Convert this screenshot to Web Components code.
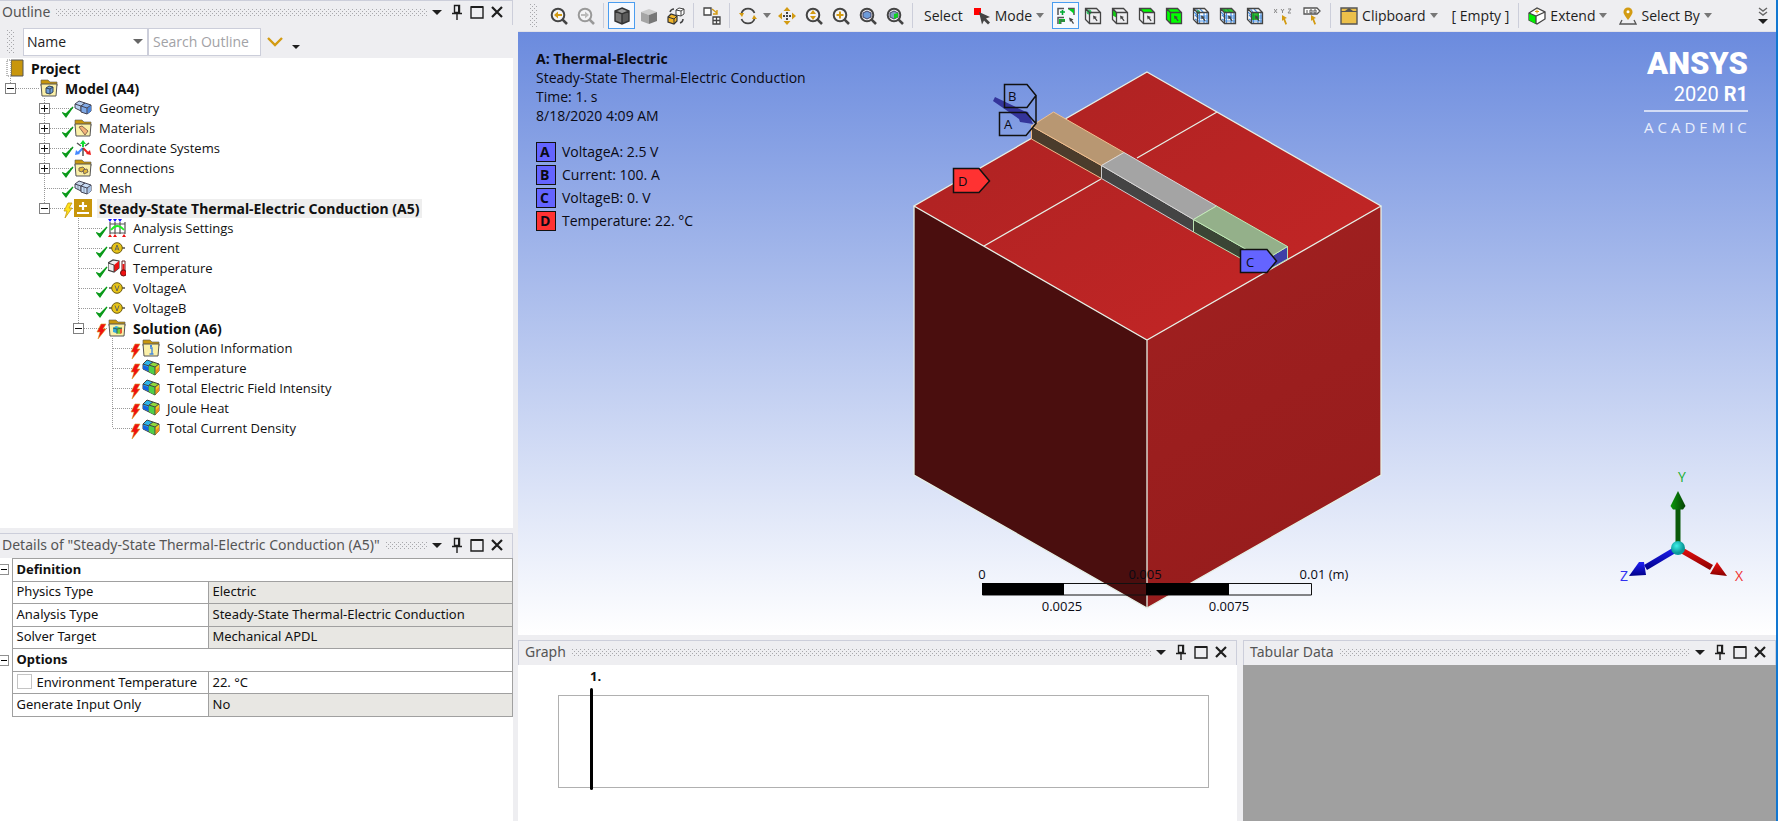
<!DOCTYPE html>
<html lang="en">
<head>
<meta charset="utf-8">
<title>Mechanical - Thermal-Electric</title>
<style>
html, body { height: 100%; margin: 0; }
body { font: 14px/20px "Open Sans", "Noto Sans", sans-serif; color: #1e1e1e; background: #eeeef1; overflow: hidden; }
</style>
</head>
<body>
<app-shell></app-shell>
<script>
const define = (name, css, html, setup) => {
  const tpl = document.createElement('template');
  tpl.innerHTML = `<style>*{box-sizing:border-box}button{font:inherit;color:inherit;background:none;border:0;padding:0;margin:0}${css}</style>${html}`;
  customElements.define(name, class extends HTMLElement {
    constructor() {
      super();
      this.attachShadow({ mode: 'open' }).append(tpl.content.cloneNode(true));
    }
    connectedCallback() { if (setup) setup(this, this.shadowRoot); }
  });
};

/* ---------- icon set, 18 x 18 grid ---------- */
const folder = '<path d="M1 3V1h7l2 2h7v4H1z" fill="#c8960c" stroke="#555" stroke-width=".6"/><path d="M1 5h16l-1 12H2z" fill="#fbf0a8" stroke="#555" stroke-width="1"/>';
const lens = (inner, c = '#444') => `<circle cx="8" cy="8" r="6.3" fill="#f4f4f6" stroke="${c}" stroke-width="2"/><path d="M12.600 12.600L17 17" stroke="${c}" stroke-width="2.600"/>${inner}`;
const pickBox = (inner, cursor = true) => `${inner}<path d="M1.500 1.500h11l4 4v11h-11l-4-4zM1.500 1.500l4 4h11M5.500 5.500v11" fill="none" stroke="#444" stroke-width="1.300"/>${cursor ? '<path d="M9 8.500l4 1.500-1.400.7 2 2.800-1 .7-2-2.800-1 1.100z" fill="#444"/>' : ''}`;
const mesh = '<path d="M2 2h11l4 4v11H6l-4-4z" fill="#fff"/><path d="M4.500 2l3 4v11M8 2l4 4v11M3 8l3 3h11M3 12l3 2h11M15 6v11M2 5l4 4h11" fill="none" stroke="#4a90e2" stroke-width="1.200"/>';
const meter = t => `<path d="M1 9h16" stroke="#444" stroke-width="1.400"/><circle cx="9" cy="9" r="5.300" fill="#e6c318" stroke="#6d5b10" stroke-width="1"/>${t}`;
const bodies = (a, b, c) => `<path d="M1 5l4-3 6 2v6l-4 2-6-3z" fill="${a}" stroke="#445" stroke-width="1"/><path d="M1 5l6 2 4-3M7 7v5" fill="none" stroke="#445"/><path d="M7 7l4-3 6 2v6l-4 3-6-2z" fill="${b}" stroke="#445" stroke-width="1"/><path d="M13.500 9l3.500-3v6l-3.500 3z" fill="${c}"/><path d="M7 7l6 2 4-3M13 9v6" fill="none" stroke="#445"/>`;
const ICONS = {
  'zoom-prev': lens('<path d="M4 8l4-3.500v2.500h4v2H8v2.500z" fill="#d39b12"/>'),
  'zoom-next': lens('<path d="M12 8L8 4.500v2.500H4v2h4v2.500z" fill="#bbb"/>', '#999'),
  'cube-edges': '<path d="M9 1l7 3-7 3-7-3z" fill="#999"/><path d="M2 4l7 3v10l-7-3z" fill="#777"/><path d="M16 4L9 7v10l7-3z" fill="#5a5a5a"/><path d="M9 1l7 3v10l-7 3-7-3V4zM2 4l7 3 7-3M9 7v10" fill="none" stroke="#333" stroke-width="1.400"/>',
  'cube-shaded': '<path d="M9 2l8 3-8 3-8-3z" fill="#ccc"/><path d="M1 5l8 3v9l-8-3z" fill="#a5a5a5"/><path d="M17 5L9 8v9l8-3z" fill="#777"/>',
  'cube-swap': '<path d="M1 10l3-3 6 2v5l-3 3-6-2z" fill="#f0b429" stroke="#333" stroke-width="1.200"/><path d="M1 10l6 2 3-3M7 12v5" fill="none" stroke="#333"/><path d="M9 3l3-2 5 1v5l-3 2-5-1z" fill="#fff" stroke="#444"/><path d="M9 3l5 1 3-2M14 4v5" fill="none" stroke="#444"/><path d="M3 5q1-3 4-3M13 16q3-1 3-4" fill="none" stroke="#444" stroke-width="1.500"/>',
  'rescale': '<path d="M1 1h7v7H1zM10 10h7v7h-7zM13.500 10v7M10 13.500h7" fill="#fff" stroke="#444" stroke-width="1.300"/><path d="M9 2l5 4M14 3v4h-4" fill="none" stroke="#d39b12" stroke-width="1.400"/>',
  'rotate': '<path d="M2.500 6a7 7 0 0 1 13 0M2.500 12a7 7 0 0 0 13 0" fill="none" stroke="#444" stroke-width="1.800"/><path d="M0 6l5 0-2 4zM18 12h-5l2-4z" fill="#d39b12"/>',
  'pan': '<path d="M9 0l3.500 4h-7zM9 18l3.500-4h-7zM0 9l4-3.500v7zM18 9l-4-3.500v7z" fill="#d39b12"/><path d="M9 5v2M9 11v2M5 9h2M11 9h2M8 9h2" stroke="#444" stroke-width="2"/>',
  'zoom': lens('<path d="M8 3l3 4H5zM8 13l3-4H5z" fill="#d39b12"/>'),
  'zoom-box': lens('<path d="M8 4.500v7M4.500 8h7" stroke="#d39b12" stroke-width="2"/>'),
  'zoom-fit': lens('<path d="M8 4l4 2v4l-4 2-4-2V6z" fill="#6d9bd8" stroke="#446"/>'),
  'zoom-sel': lens('<path d="M8 4l4 2v4l-4 2-4-2V6z" fill="#7fa0c0" stroke="#446"/><path d="M8 7l4-1v4l-4 2z" fill="#10d020"/>'),
  'mode': '<path d="M1 1h7v7H1z" fill="#f00"/><path d="M6 5l11 5-4 1.500 4 4-2 2-4-4-2 4z" fill="#444"/>',
  'smart': '<path d="M1 8V1.500h6M1 17v-6.500h6M11 1.500h6V8" fill="none" stroke="#555" stroke-width="1.500"/><path d="M11 2h6v5l-2-2z" fill="#0c2"/><path d="M3 5h5M5.500 3v5" stroke="#0a3" stroke-width="1.600"/><path d="M2 12h6v3H4v2H2z" fill="#0c2"/><path d="M4 12v5M4 14h4" stroke="#555"/><path d="M12 10.500l4.500 2-1.500.7 2 3-1 .7-2-3-1 1z" fill="#444"/>',
  'pick-vertex': pickBox('<circle cx="5" cy="5" r="2.500" fill="#3c6"/>'),
  'pick-edge': pickBox('<path d="M1 1l5 5v5L1 8z" fill="#1c1"/>'),
  'pick-face': pickBox('<path d="M1.500 1.500h11l4 4h-11z" fill="#0f0"/>'),
  'pick-body': pickBox('<path d="M1.500 1.500h11l4 4v11h-11l-4-4z" fill="#0f0"/>'),
  'pick-node': pickBox(mesh + '<circle cx="6" cy="5" r="2" fill="#3a6"/>'),
  'pick-elface': pickBox(mesh + '<path d="M2 2h11l3 4H5z" fill="#0b0" opacity=".8"/>'),
  'pick-elem': pickBox(mesh + '<path d="M5 5h8v8H5z" fill="#0a0" opacity=".8"/>'),
  'coord': '<path d="M0 2l3 4M3 2L0 6M7 2l1.500 2L10 2M8.500 4v2M14 2h3l-3 4h3" fill="none" stroke="#888"/><path d="M8 8l5 3-2 .8L13 17l-1.600.7-2-5L8 14z" fill="#d39b12"/>',
  'probe': '<path d="M1 1h13l3 3-3 3H1z" fill="#fff" stroke="#555" stroke-width="1.300"/><path d="M4 3v3M7 3h2v3H7zM11 3h2v3h-2z" fill="none" stroke="#555"/><path d="M8 8l5 3-2 .8L13 17l-1.600.7-2-5L8 14z" fill="#d39b12"/>',
  'clipboard': '<path d="M1 1h16v16H1z" fill="#ecc04a" stroke="#555" stroke-width="1.400"/><path d="M1 4.500h16" stroke="#555"/><path d="M5 4l4-3 4 3z" fill="#555"/>',
  'extend': '<path d="M1 6l8-5 8 4v7l-8 5-8-4z" fill="#fff" stroke="#444" stroke-width="1.300"/><path d="M1 6l7 3v8l-7-4z" fill="#0e0"/><path d="M1 6l7 3 9-4M8 9v8" fill="none" stroke="#444" stroke-width="1.300"/><path d="M9 2.500v4M7 4.500h4" stroke="#d39b12"/>',
  'select-by': '<path d="M9 13C5 8 4.500 6.500 4.500 4.800a4.500 4.300 0 0 1 9 0C13.500 6.500 13 8 9 13z" fill="#d39b12"/><circle cx="9" cy="4.800" r="1.500" fill="#fff"/><path d="M3 13l-2 4h16l-2-4" fill="none" stroke="#555" stroke-width="1.300"/>',
  'project': '<path d="M5 1h12v16H5z" fill="#c8960c" stroke="#555"/><path d="M1 1h4v16H1z" fill="#fff" stroke="#777" stroke-dasharray="1 1"/>',
  'model': folder + '<path d="M6 9l3-2 4 1v5l-3 2-4-1z" fill="#6f9fdc" stroke="#345"/><path d="M6 9l4 1 3-2M10 10v5" fill="none" stroke="#345"/>',
  'geometry': bodies('#b5cdee', '#7fa9e6', '#4a86dd'),
  'materials': folder + '<path d="M5 8l3-1 6 5-3 4z" fill="#f3b27a" stroke="#8a6a50"/>',
  'coords': '<path d="M9 1l3 4H6z" fill="#1d3"/><path d="M9 4v4" stroke="#1d3" stroke-width="2"/><path d="M17 16l-5-1 4-4z" fill="#e22"/><path d="M1 16l1-5 4 4z" fill="#48f"/><path d="M9 9l-5 5" stroke="#48f" stroke-width="2"/><path d="M9 9l5 5" stroke="#e22" stroke-width="2"/><path d="M3 4l4 3M15 4l-4 3M9 9v8" stroke="#555" stroke-width="1.500"/>',
  'connections': folder + '<path d="M5 9l4-1 2 2-3 3-3-1zM9 11l4-1 1 3-4 2z" fill="#e2b93c" stroke="#765"/>',
  'mesh': bodies('#c6d6ea', '#c6dbf5', '#a4c0e4') + '<path d="M4 6v5M10 8v6" stroke="#567" stroke-width=".6"/>',
  'analysis': '<path d="M0 0h18v18H0z" fill="#c8960c"/><path d="M9 3v8M5 7h8M3 14h12" stroke="#fff" stroke-width="2.200"/>',
  'settings': '<path d="M2 3v12M7 3v12M12 3v12M17 3v12M2 5h15M2 14h15" stroke="#555" stroke-width="1.200"/><path d="M3 11q6-8 13 0" fill="none" stroke="#2e2" stroke-width="1.800"/><path d="M0 0h4L2 3zM5 0h4L7 3zM10 0h4l-2 3z" fill="#11f"/><path d="M0 18h4l-2-3zM5 18h4l-2-3zM14 18h4l-2-3z" fill="#e11"/>',
  'current': meter('<path d="M7 11.500L9 6l2 5.500M7.500 10h3" fill="none" stroke="#665"/>'),
  'voltage': meter('<path d="M7 6.500L9 12l2-5.500" fill="none" stroke="#665"/>'),
  'temp': '<path d="M0 4l5-3 6 1v7l-5 4-6-2z" fill="#eee" stroke="#444" stroke-width="1.200"/><path d="M6 6l5-4v7l-5 4z" fill="#e11"/><path d="M0 4l6 2v7" fill="none" stroke="#444"/><path d="M14 2h3v9h-3z" fill="#fff" stroke="#622"/><path d="M14.500 5h2v7h-2z" fill="#e11"/><circle cx="15.500" cy="14" r="3" fill="#e11" stroke="#611"/>',
  'solution': folder + '<path d="M5 9l3-2 3 1v5l-3 1-3-1z" fill="#3ad"/><path d="M9 9l2-1 3 1v5l-3 1-2-1z" fill="#7c3"/><path d="M12 10l2-1v5l-2 1z" fill="#e53"/><path d="M5 9l4 1 5-1M9 10v5" fill="none" stroke="#365"/>',
  'info': folder + '<path d="M8 9h2v6M7.500 15h4" fill="none" stroke="#48d" stroke-width="1.400"/><path d="M8 6h2v2H8z" fill="#48d"/>',
  'result': '<path d="M1 5l4-4 6 2v7l-4 3-6-3z" fill="#2fb4e8" stroke="#444"/><path d="M1 6l5 2v4L1 10z" fill="#1666e0"/><path d="M7 6l4-3 6 2v7l-4 4-6-3z" fill="#8fd83a" stroke="#444"/><path d="M7 6l6 2v8l-6-3z" fill="#4fd048"/><path d="M13 8l4-3v7l-4 4z" fill="#f3d01c"/><path d="M14 11l3-3v4l-3 3z" fill="#f08a22"/><path d="M7 6l6 2 4-3M13 8v8M1 5l6 2" fill="none" stroke="#444"/>',
  'more': '<path d="M5 1l4 3 4-3M5 5l4 3 4-3" fill="none" stroke="#666" stroke-width="1.400"/><path d="M4 12h10l-5 5z" fill="#1e1e1e"/>',
  'arrow': '<path d="M4 7h10l-5 5z" fill="#1e1e1e"/>',
  'pin': '<path d="M6.500 2.500h5v7h-5zM4 10.500h10M9 11v6" fill="none" stroke="#1e1e1e" stroke-width="1.400"/><path d="M10 2h2v8h-2z" fill="#1e1e1e"/>',
  'maximize': '<path d="M3 4h12v11H3z" fill="none" stroke="#1e1e1e" stroke-width="1.400"/><path d="M3 4h12" stroke="#1e1e1e" stroke-width="2"/>',
  'close': '<path d="M4 4l10 10M14 4L4 14" stroke="#1e1e1e" stroke-width="2.200"/>',
  'chevron': '<path d="M2 5l7 7 7-7" fill="none" stroke="#d39b12" stroke-width="2.400"/>'
};
class UiIcon extends HTMLElement {
  constructor() { super(); this.attachShadow({ mode: 'open' }); }
  static get observedAttributes() { return ['name']; }
  attributeChangedCallback() { this.render(); }
  connectedCallback() { this.render(); }
  render() {
    this.shadowRoot.innerHTML = `<style>:host{display:block;flex:none;width:18px;height:18px}svg{display:block}</style><svg width="18" height="18" viewBox="0 0 18 18" aria-hidden="true">${ICONS[this.getAttribute('name')] || ''}</svg>`;
  }
}
customElements.define('ui-icon', UiIcon);

define('dot-grip', `
:host{display:block;height:7px;flex:1;
background-image:conic-gradient(from 270deg at 1px 1px,#a8a8ac 90deg,transparent 0),conic-gradient(from 270deg at 1px 1px,#a8a8ac 90deg,transparent 0);
background-size:4px 4px;background-position:0 0,2px 2px}
:host([vertical]){flex:none;width:7px;height:23px}`, '');

define('panel-title', `
:host{display:flex;align-items:center;height:25px;padding:0 5px 2px 2px;color:#555;border-top:1px solid #ccceda;border-right:1px solid #ccceda;background:#eeeef1}
h2{margin:0 6px 0 0;font:400 14px/20px "Noto Sans","Open Sans",sans-serif;white-space:nowrap}
button{width:20px;height:20px;display:grid;place-items:center}`,
`<h2><slot></slot></h2><dot-grip></dot-grip>
<button aria-label="Menu"><ui-icon name="arrow"></ui-icon></button><button aria-label="Pin"><ui-icon name="pin"></ui-icon></button><button aria-label="Maximize"><ui-icon name="maximize"></ui-icon></button><button aria-label="Close"><ui-icon name="close"></ui-icon></button>`);

define('outline-search', `
:host{display:flex;align-items:center;height:33px;padding-left:7px;background:#eeeef1}
.pick{display:flex;align-items:center;width:125px;height:28px;margin-left:9px;background:#fff;border:1px solid #ccceda}
select{appearance:none;flex:1;min-width:0;height:26px;padding:0 3px;border:0;background:none;font:inherit;color:#1e1e1e}
.pick svg{margin-right:4px;flex:none}
input{width:113px;height:28px;padding:0 4px;border:1px solid #ccceda;background:#fff;font:inherit}
input::placeholder{color:#a2a2a6;opacity:1}
.go{margin-left:5px}.menu{width:18px;height:18px;margin:10px 0 0 3px}`,
`<dot-grip vertical></dot-grip>
<span class="pick"><select aria-label="Search by"><option>Name</option></select><svg width="10" height="6"><path d="M0 0h10L5 5z" fill="#666"/></svg></span>
<input type="text" aria-label="Search Outline" placeholder="Search Outline">
<button class="go" aria-label="Search"><ui-icon name="chevron"></ui-icon></button>
<button class="menu" aria-label="Options"><svg width="18" height="18"><path d="M5 7h8l-4 4z" fill="#1e1e1e"/></svg></button>`);

/* ---------- outline tree ---------- */
const STATUS = {
  ok: '<path d="M1 11l3 4 7-10-6 6-1 1z" fill="#0a9a1a" stroke="#0a9a1a" stroke-width="1.300"/>',
  stale: '<path d="M6 1h4L7 6h3L3 16l2-7H2z" fill="#ffe21a" stroke="#c59a10" stroke-width=".8"/>',
  bolt: '<path d="M5 2h5L7 7h3L2 17l2-7H1z" fill="#f01010" stroke="#d8a020" stroke-width=".6"/>'
};
define('tree-node', `
:host{display:block;--dots:#999}
.row{display:flex;align-items:center;height:20px}
.gutter{position:relative;width:11px;height:20px;flex:none}
.v{display:block;width:1px;height:20px;margin-left:5px;background:linear-gradient(var(--dots) 50%,transparent 50%) 0 0/1px 2px}
:host([last]) .v{height:10px}
.toggle{position:absolute;left:0;top:5px;width:11px;height:11px;background:#fff;border:1px solid #808080;display:grid;place-items:center}
.dash{width:24px;height:1px;flex:none;background:linear-gradient(90deg,var(--dots) 50%,transparent 50%) 0 0/2px 1px;margin-right:-12px}
:host([leaf]) .dash{margin-left:-5px;margin-right:-7px}
.status{width:12px;height:18px;flex:none;margin-top:6px}
.text{margin-left:5px;padding:0 2px;line-height:19px;white-space:nowrap;font-size:13px;color:#111}
:host([bold]) .text{font:700 14px/19px "Noto Sans","Open Sans",sans-serif}
:host([selected]) .text{background:#eeeeee}
.kids{margin-left:34px}
:host([root]) .gutter,:host([root]) .dash,:host([root]) .status{display:none}
:host([root]) .row{padding-left:6px}
:host([root]) .kids{margin-left:5px}`,
`<div class="row"><span class="gutter"><span class="v"></span></span><span class="dash"></span><svg class="status" viewBox="0 0 12 18"></svg><ui-icon></ui-icon><span class="text"></span></div><div class="kids"><slot></slot></div>`,
(host, root) => {
  const t = host.getAttribute('toggle');
  if (t && !root.querySelector('.toggle')) {
    const b = document.createElement('button');
    b.className = 'toggle';
    b.setAttribute('aria-label', t === 'minus' ? 'Collapse' : 'Expand');
    b.innerHTML = `<svg width="7" height="7"><path d="M0 3h7v1H0z${t === 'plus' ? 'M3 0h1v7H3z' : ''}" fill="#111"/></svg>`;
    root.querySelector('.gutter').append(b);
  }
  root.querySelector('.status').innerHTML = STATUS[host.getAttribute('status')] || '';
  root.querySelector('ui-icon').setAttribute('name', host.getAttribute('icon'));
  root.querySelector('.text').textContent = host.getAttribute('label');
});

define('outline-tree', `:host{display:block;background:#fff;padding-bottom:8px;overflow:hidden}`, `
<tree-node root bold icon="project" label="Project">
 <tree-node last bold toggle="minus" icon="model" label="Model (A4)">
  <tree-node toggle="plus" status="ok" icon="geometry" label="Geometry"></tree-node>
  <tree-node toggle="plus" status="ok" icon="materials" label="Materials"></tree-node>
  <tree-node toggle="plus" status="ok" icon="coords" label="Coordinate Systems"></tree-node>
  <tree-node toggle="plus" status="ok" icon="connections" label="Connections"></tree-node>
  <tree-node leaf status="ok" icon="mesh" label="Mesh"></tree-node>
  <tree-node last bold selected toggle="minus" status="stale" icon="analysis" label="Steady-State Thermal-Electric Conduction (A5)">
   <tree-node leaf status="ok" icon="settings" label="Analysis Settings"></tree-node>
   <tree-node leaf status="ok" icon="current" label="Current"></tree-node>
   <tree-node leaf status="ok" icon="temp" label="Temperature"></tree-node>
   <tree-node leaf status="ok" icon="voltage" label="VoltageA"></tree-node>
   <tree-node leaf status="ok" icon="voltage" label="VoltageB"></tree-node>
   <tree-node last bold toggle="minus" status="bolt" icon="solution" label="Solution (A6)">
    <tree-node leaf status="bolt" icon="info" label="Solution Information"></tree-node>
    <tree-node leaf status="bolt" icon="result" label="Temperature"></tree-node>
    <tree-node leaf status="bolt" icon="result" label="Total Electric Field Intensity"></tree-node>
    <tree-node leaf status="bolt" icon="result" label="Joule Heat"></tree-node>
    <tree-node last leaf status="bolt" icon="result" label="Total Current Density"></tree-node>
   </tree-node>
  </tree-node>
 </tree-node>
</tree-node>`);

/* ---------- details ---------- */
define('details-grid', `
:host{display:block;background:#fff}
table{width:100%;height:159px;border-collapse:collapse;table-layout:fixed;font:13px/18px "Noto Sans","Open Sans",sans-serif;color:#111}
.g{width:12px}.k{width:196px}
td,th{padding:0 4px 2px;border:1px solid #a0a0a0;text-align:left;font-weight:400;white-space:nowrap}
th[colspan]{font-weight:700}
td.gut{border-width:0 1px 0 0;padding:0}
td.ro{background:#e8e7e3}
button{display:grid;place-items:center;width:9px;height:11px;border:1px solid #909090;border-left:0}
label{display:flex;align-items:center;gap:5px}
input{appearance:none;width:15px;height:15px;margin:0;border:1px solid #c4c4c4;background:#fff}`,
`<table><colgroup><col class="g"><col class="k"><col></colgroup>
<tr><td class="gut"><button aria-label="Collapse Definition"><svg width="6" height="1"><path d="M0 0h6v1H0z"/></svg></button></td><th colspan="2">Definition</th></tr>
<tr><td class="gut"></td><th>Physics Type</th><td class="ro">Electric</td></tr>
<tr><td class="gut"></td><th>Analysis Type</th><td class="ro">Steady-State Thermal-Electric Conduction</td></tr>
<tr><td class="gut"></td><th>Solver Target</th><td class="ro">Mechanical APDL</td></tr>
<tr><td class="gut"><button aria-label="Collapse Options"><svg width="6" height="1"><path d="M0 0h6v1H0z"/></svg></button></td><th colspan="2">Options</th></tr>
<tr><td class="gut"></td><th><label><input type="checkbox">Environment Temperature</label></th><td>22. °C</td></tr>
<tr><td class="gut"></td><th>Generate Input Only</th><td class="ro">No</td></tr></table>`);

/* ---------- graphics toolbar ---------- */
define('tool-button', `
:host{display:block;flex:none}
button{display:flex;align-items:center;justify-content:center;gap:4px;min-width:27px;height:27px;white-space:nowrap;line-height:20px}
:host([on]) button{border:1px solid #4a9df0;background:#f6f9fe}
:host([text]) button{padding:0 5px}
:host([wide]) button{min-width:29px}
.dd{display:none}
:host([drop]) .dd{display:block}`,
`<button><ui-icon></ui-icon><span class="t"><slot></slot></span><svg class="dd" width="8" height="5"><path d="M0 0h8L4 5z" fill="#777"/></svg></button>`,
(host, root) => {
  const n = host.getAttribute('icon');
  root.querySelector('ui-icon').setAttribute('name', n);
  if (!host.hasAttribute('text')) { root.querySelector('.t').style.display = 'none'; root.querySelector('button').setAttribute('aria-label', n); }
});
define('graphics-toolbar', `
:host{display:flex;align-items:center;height:32px;padding-left:12px;background:#eeeef1;border-bottom:1px solid #e2e2e8;overflow:hidden}
hr{flex:none;width:1px;height:25px;margin:0 4px;border:0;background:#ccceda}
dot-grip{margin-right:8px}
.empty{padding:0 4px;margin:0 1px 0 5px;white-space:nowrap}
.label{padding:0 5px 0 7px;white-space:nowrap}
.gap{margin-left:2px}.set{margin-left:3px}.end{margin-left:auto}
.m{width:12px;height:27px;display:grid;place-items:center}`,
`<dot-grip vertical></dot-grip>
<tool-button icon="zoom-prev"></tool-button><tool-button icon="zoom-next"></tool-button><hr>
<tool-button icon="cube-edges" on></tool-button><tool-button icon="cube-shaded"></tool-button><tool-button icon="cube-swap"></tool-button><hr>
<tool-button icon="rescale"></tool-button><hr>
<tool-button icon="rotate"></tool-button><button class="m" aria-label="Rotate options"><svg width="8" height="5"><path d="M0 0h8L4 5z" fill="#777"/></svg></button>
<tool-button icon="pan"></tool-button><tool-button icon="zoom"></tool-button><tool-button icon="zoom-box"></tool-button><tool-button icon="zoom-fit"></tool-button><tool-button icon="zoom-sel"></tool-button><hr>
<span class="label">Select</span><tool-button icon="mode" text drop>Mode</tool-button>
<tool-button class="set" icon="smart" on></tool-button><tool-button icon="pick-vertex"></tool-button><tool-button icon="pick-edge"></tool-button><tool-button icon="pick-face"></tool-button><tool-button icon="pick-body"></tool-button><tool-button icon="pick-node"></tool-button><tool-button icon="pick-elface"></tool-button><tool-button icon="pick-elem"></tool-button><tool-button icon="coord" wide></tool-button><tool-button icon="probe" wide></tool-button><hr>
<tool-button icon="clipboard" text drop>Clipboard</tool-button><span class="empty">[ Empty ]</span><hr>
<tool-button icon="extend" text drop>Extend</tool-button><tool-button class="gap" icon="select-by" text drop>Select By</tool-button>
<tool-button class="end" icon="more"></tool-button>`);

/* ---------- 3D view ---------- */
define('scene-legend', `
:host{display:block;font-size:14px;line-height:19px;color:#0a0a14}
p{margin:0}.title{font-weight:700}
ul{list-style:none;margin:15px 0 0;padding:0}
li{display:flex;align-items:center;gap:6px;height:23px}
b{width:20px;height:20px;border:1px solid #111;background:#6464ff;padding-left:3px;line-height:17px}
.hot{background:#ff3232}`,
`<p class="title">A: Thermal-Electric</p><p>Steady-State Thermal-Electric Conduction</p><p>Time: 1. s</p><p>8/18/2020 4:09 AM</p>
<ul><li><b>A</b>VoltageA: 2.5 V</li><li><b>B</b>Current: 100. A</li><li><b>C</b>VoltageB: 0. V</li><li><b class="hot">D</b>Temperature: 22. °C</li></ul>`);

define('brand-mark', `
:host{display:block;color:#fff;text-align:right}
.name{font:900 31px/36px Roboto,"Open Sans",sans-serif}
.ver{font:20px/24px Roboto,"Open Sans",sans-serif}
.ed{margin-top:4px;padding-top:4px;border-top:2px solid #d3dcf5;font-size:15px;line-height:22px;letter-spacing:4px;width:104px;color:#e9eefb;white-space:nowrap}`,
`<div class="name">ANSYS</div><div class="ver">2020 <b>R1</b></div><div class="ed">ACADEMIC</div>`);

define('axis-triad', `:host{display:block}svg{display:block}text{font:14px "Open Sans",sans-serif}`,
`<svg width="150" height="130" viewBox="0 0 150 130"><defs>
<linearGradient id="g"><stop offset="0" stop-color="#0a9a0a"/><stop offset="1" stop-color="#064006"/></linearGradient>
<linearGradient id="r" x2="0" y2="1"><stop offset="0" stop-color="#f01010"/><stop offset="1" stop-color="#800"/></linearGradient>
<linearGradient id="b" x2="0" y2="1"><stop offset="0" stop-color="#2020f8"/><stop offset="1" stop-color="#008"/></linearGradient>
<radialGradient id="s" cx=".4" cy=".35"><stop offset="0" stop-color="#3ff0e8"/><stop offset="1" stop-color="#0a9a9a"/></radialGradient></defs>
<path d="M67.500 46h5v40h-5z" fill="#0a5a0a"/><path d="M70 29l7.500 15-2.500 3.500H65L62.500 44z" fill="url(#g)"/>
<path d="M72 84l33 19-3 5-33-19z" fill="url(#r)"/><path d="M119 114l-17-2 7-12z" fill="url(#r)"/>
<path d="M68 84l-32 19 3 5 32-19z" fill="url(#b)"/><path d="M21 114l10-14h5l2 13z" fill="url(#b)"/>
<circle cx="70" cy="86" r="7" fill="url(#s)"/>
<text x="70" y="20" fill="#18b030">Y</text><text x="127" y="119" fill="#f03030">X</text><text x="12" y="119" fill="#3030f0">Z</text></svg>`);

define('model-scene', `:host{display:block}svg{display:block;width:100%;height:100%}text{font:13px "Open Sans",sans-serif;fill:#0a0a14}.e{stroke:#e6f0e6;stroke-width:1.300;fill:none}.tag{stroke:#111;stroke-width:1.500}`,
`<svg viewBox="518 32 1258 603"><defs>
<linearGradient id="top" x1="0" y1="0" x2="1" y2="1"><stop offset="0" stop-color="#ab2222"/><stop offset="1" stop-color="#c62626"/></linearGradient>
<linearGradient id="side" x1=".3" y1="0" x2=".6" y2="1"><stop offset="0" stop-color="#a02020"/><stop offset="1" stop-color="#961c1c"/></linearGradient></defs>
<path d="M914 206l233 134v268L914 475z" fill="#4a0e0e"/>
<path d="M1381 206l-234 134v268l234-133z" fill="url(#side)"/>
<path d="M1147 72l234 134-234 134-233-134z" fill="url(#top)"/>
<path class="e" d="M1147 72l234 134-234 134-233-134zM1147 340v268M914 206v269l233 133 234-133V206M1217 112l-80 46M1101 179l-117 67"/>
<path d="M1031.500 126l70 39.500v13L1031.500 139z" fill="#4b3c2c" stroke="#ecb98a"/>
<path d="M1101.500 165.500l92 54v12.500l-92-53.500z" fill="#444" stroke="#ccc"/>
<path d="M1193.500 219.500L1265 260v12l-71.500-40z" fill="#3a4535" stroke="#b8e0b0"/>
<path d="M1265 260l22.500-13.500V259L1265 272z" fill="#4040a8" stroke="#b8e0b0"/>
<path d="M1031.500 126l22-14 70.500 40.500-22.500 13z" fill="#b89772" stroke="#f0c090"/>
<path d="M1124 152.500l92.500 53.500-23 13.500-92-54z" fill="#a4a4a4" stroke="#d8d8d8"/>
<path d="M1216.500 206l71 40.500L1265 260l-71.500-40.500z" fill="#94b08a" stroke="#c0ecb8"/>
<path d="M995 97l-2 4 26 18 1 3 13 2-5-12-4-1z" fill="#34349a"/>
<path class="tag" d="M1004.500 84.500H1027l9 11-9 12h-22.500zM999.500 112.500H1026l10 11-10 12h-26.500zM1036 96v27" fill="none" stroke="#14142c"/>
<path class="tag" d="M953.500 168.500H979l10.500 12.500L979 192.500h-25.500z" fill="#ff3232"/>
<path class="tag" d="M1240.500 249.500H1267l9.500 11.500-9.500 11.500h-26.500z" fill="#6464ff"/>
<text x="1008" y="101">B</text><text x="1004" y="129">A</text><text x="958" y="186">D</text><text x="1246" y="267">C</text>
<path d="M982.500 583.500h329v11.500h-329z" fill="none" stroke="#111"/><path d="M982 583h82v12h-82zM1146 583h83v12h-83z"/>
<g text-anchor="middle"><text x="982" y="579">0</text><text x="1145" y="579">0.005</text><text x="1324" y="579">0.01 (m)</text><text x="1062" y="611">0.0025</text><text x="1229" y="611">0.0075</text></g>
</svg>`);

define('graphics-view', `
:host{display:block;position:relative;min-height:0;background:linear-gradient(#6b8bde,#fff)}
model-scene{width:100%;height:100%}
scene-legend{position:absolute;left:18px;top:17px}
brand-mark{position:absolute;right:28px;top:14px}
axis-triad{position:absolute;right:18px;bottom:43px}`,
`<model-scene></model-scene><scene-legend></scene-legend><brand-mark></brand-mark><axis-triad></axis-triad>`);

define('time-graph', `
:host{display:flex;background:#fff}
.plot{position:relative;flex:1;margin:30px 28px 33px 40px;border:1px solid #b0b0b0}
.mark{position:absolute;left:31px;top:-8px;bottom:-3px;width:3px;border-radius:2px;background:#000}
.lab{position:absolute;left:31px;top:-30px;font-weight:700;font-size:13px;line-height:20px;color:#111}`,
`<div class="plot"><span class="lab">1.</span><span class="mark"></span></div>`);

define('app-shell', `
:host{display:grid;grid-template-columns:513px minmax(0,1fr);column-gap:5px;height:100%;background:#eeeef1;border-right:2px solid #1177d1}
.left{display:grid;grid-template-rows:auto auto minmax(0,1fr) auto 263px;min-height:0}
.left .d{margin-top:5px}
.right{display:grid;grid-template-rows:auto minmax(0,1fr) 186px;min-height:0}
.bottom{display:grid;grid-template-columns:719px minmax(0,1fr);column-gap:6px;margin-top:5px}
.col{display:grid;grid-template-rows:auto minmax(0,1fr);min-height:0}
.grey{background:#a0a0a0}
.bottom panel-title{padding-left:6px;border-left:1px solid #ccceda}`,
`<section class="left"><panel-title>Outline</panel-title><outline-search></outline-search><outline-tree></outline-tree><panel-title class="d">Details of "Steady-State Thermal-Electric Conduction (A5)"</panel-title><details-grid></details-grid></section>
<section class="right"><graphics-toolbar></graphics-toolbar><graphics-view></graphics-view>
<div class="bottom"><div class="col"><panel-title>Graph</panel-title><time-graph></time-graph></div><div class="col"><panel-title>Tabular Data</panel-title><div class="grey"></div></div></div></section>`);
</script>
</body>
</html>
